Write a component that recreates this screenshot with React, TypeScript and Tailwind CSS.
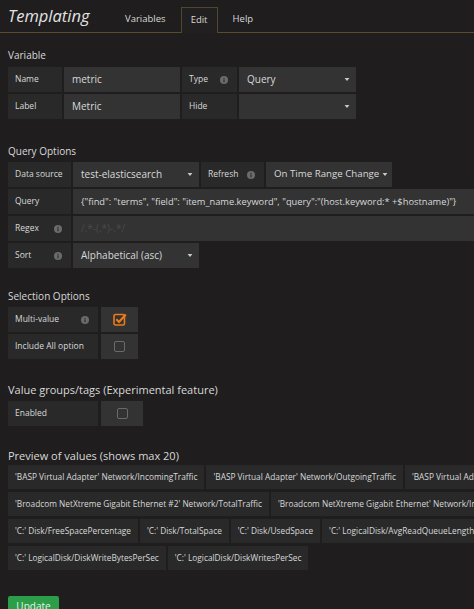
import { ReactNode } from "react";

const FONT = { fontFamily: '"Open Sans", "Noto Sans", sans-serif' };

const Info = () => (
  <svg viewBox="0 0 10 10" className="h-[8px] w-[8px] shrink-0">
    <circle cx="5" cy="5" r="5" fill="#6b6b6b" />
    <rect x="4.3" y="4.2" width="1.4" height="3.6" fill="#292929" />
    <rect x="4.3" y="2.2" width="1.4" height="1.3" fill="#292929" />
  </svg>
);

const Caret = () => (
  <svg viewBox="0 0 8 5" className="ml-[3px] h-[3px] w-[6px] shrink-0">
    <path d="M0 0 L8 0 L4 5 Z" fill="#c8c9ca" />
  </svg>
);

const Label = ({ w, children, info }: { w: string; children: ReactNode; info?: boolean }) => (
  <div className={`${w} flex h-full shrink-0 items-center justify-between bg-[#292929] pl-[7px] pr-[9px] text-[8.5px] whitespace-nowrap text-[#d8d9da]`}>
    <span>{children}</span>
    {info && <Info />}
  </div>
);

const Input = ({
  w,
  children,
  select,
  placeholder,
  size = "text-[10px]",
}: {
  w: string;
  children?: ReactNode;
  select?: boolean;
  placeholder?: boolean;
  size?: string;
}) => (
  <div
    className={`${w} ${size} flex h-full shrink-0 items-center justify-between overflow-hidden bg-[#333333] pl-[8px] pr-[6px] whitespace-nowrap ${
      placeholder ? "text-[#4a4a4a]" : "text-[#d8d9da]"
    }`}
  >
    <span>{children}</span>
    {select && <Caret />}
  </div>
);

const Check = ({ checked }: { checked?: boolean }) =>
  checked ? (
    <svg viewBox="0 0 14 13" className="h-[13px] w-[14px]">
      <rect x="1" y="1.5" width="10.5" height="10.5" rx="1.5" fill="none" stroke="#eb7b18" strokeWidth="1.6" />
      <path d="M3.3 6.3 L6 9 L12.8 1.6" fill="none" stroke="#eb7b18" strokeWidth="2.2" />
    </svg>
  ) : (
    <div className="h-[11px] w-[11px] rounded-[2px] border border-[#6a6a6a]" />
  );

const Heading = ({ children, className }: { children: ReactNode; className: string }) => (
  <div className={`text-[#d8d9da] ${className}`}>{children}</div>
);

const Tag = ({ children }: { children: ReactNode }) => (
  <div className="flex h-full shrink-0 items-center bg-[#292929] px-[7px] text-[8.3px] whitespace-nowrap text-[#d8d9da]">
    {children}
  </div>
);

const tagRows = [
  [
    "'BASP Virtual Adapter' Network/IncomingTraffic",
    "'BASP Virtual Adapter' Network/OutgoingTraffic",
    "'BASP Virtual Adapter' Network/TotalTraffic",
  ],
  [
    "'Broadcom NetXtreme Gigabit Ethernet #2' Network/TotalTraffic",
    "'Broadcom NetXtreme Gigabit Ethernet' Network/IncomingTraffic",
  ],
  ["'C:' Disk/FreeSpacePercentage", "'C:' Disk/TotalSpace", "'C:' Disk/UsedSpace", "'C:' LogicalDisk/AvgReadQueueLength", "'C:' LogicalDisk/AvgWriteQueueLength"],
  ["'C:' LogicalDisk/DiskWriteBytesPerSec", "'C:' LogicalDisk/DiskWritesPerSec"],
];

export default function App() {
  return (
    <div className="h-[609px] w-[474px] overflow-hidden bg-[#1f1d1d]" style={FONT}>
      <header className="flex h-[33px] items-end border-b border-[#5b4c30]">
        <div className="w-[88px] shrink-0 self-start pt-[4px] pl-[8px] text-[16.5px] leading-[24px] italic text-[#e3e3e3]">Templating</div>
        <nav className="ml-[22px] flex items-end text-[9.5px] text-[#d8d9da]">
          <div className="flex h-[25px] items-center px-[15px]">Variables</div>
          <div className="-mb-px flex h-[26px] w-[37px] items-center justify-center border border-b-0 border-[#524631] bg-[#211f1f]">Edit</div>
          <div className="flex h-[25px] items-center px-[15px]">Help</div>
        </nav>
      </header>

      <main className="px-[8px]">
        <Heading className="mt-[13px] mb-[3px] text-[10px] leading-[18px]">Variable</Heading>
        <div className="flex flex-col gap-[2px]">
          <div className="flex h-[25px] gap-[2px]">
            <Label w="w-[54px]">Name</Label>
            <Input w="w-[116px]">metric</Input>
            <Label w="w-[55px]" info>Type</Label>
            <Input w="w-[117px]" select>Query</Input>
          </div>
          <div className="flex h-[25px] gap-[2px]">
            <Label w="w-[54px]">Label</Label>
            <Input w="w-[116px]">Metric</Input>
            <Label w="w-[55px]">Hide</Label>
            <Input w="w-[117px]" select />
          </div>
        </div>

        <Heading className="mt-[23px] mb-[2px] text-[10px] leading-[18px]">Query Options</Heading>
        <div className="flex flex-col gap-[2px]">
          <div className="flex h-[25px] gap-[2px]">
            <Label w="w-[63px]">Data source</Label>
            <Input w="w-[126px]" select>test-elasticsearch</Input>
            <Label w="w-[63px]" info>Refresh</Label>
            <Input w="w-[126px]" select size="text-[9.7px]">On Time Range Change</Input>
          </div>
          <div className="flex h-[25px] gap-[2px]">
            <Label w="w-[63px]">Query</Label>
            <Input w="w-[420px]" size="text-[9.3px]">
              {'{"find": "terms", "field": "item_name.keyword", "query":"(host.keyword:* +$hostname)"}'}
            </Input>
          </div>
          <div className="flex h-[25px] gap-[2px]">
            <Label w="w-[63px]" info>Regex</Label>
            <Input w="w-[420px]" placeholder>/.*-(.*)-.*/</Input>
          </div>
          <div className="flex h-[25px] gap-[2px]">
            <Label w="w-[63px]" info>Sort</Label>
            <Input w="w-[126px]" select>Alphabetical (asc)</Input>
          </div>
        </div>

        <Heading className="mt-[19px] mb-[2px] text-[10px] leading-[18px]">Selection Options</Heading>
        <div className="flex flex-col gap-[2px]">
          <div className="flex h-[25px] gap-[3px]">
            <Label w="w-[90px]" info>Multi-value</Label>
            <div className="flex h-full w-[37px] items-center justify-center bg-[#333333]">
              <Check checked />
            </div>
          </div>
          <div className="flex h-[25px] gap-[3px]">
            <Label w="w-[90px]">Include All option</Label>
            <div className="flex h-full w-[37px] items-center justify-center bg-[#333333]">
              <Check />
            </div>
          </div>
        </div>

        <Heading className="mt-[21px] mb-[1px] text-[11px] leading-[20px]">Value groups/tags (Experimental feature)</Heading>
        <div className="flex h-[25px] gap-[3px]">
          <Label w="w-[90px]">Enabled</Label>
          <div className="flex h-full w-[42px] items-center justify-center bg-[#333333]">
            <Check />
          </div>
        </div>

        <Heading className="mt-[21px] mb-0 text-[11px] leading-[18px]">Preview of values (shows max 20)</Heading>
        <div className="flex flex-col gap-[3px]">
          {tagRows.map((row, i) => (
            <div key={i} className="flex h-[24px] gap-[2px]">
              {row.map((t) => (
                <Tag key={t}>{t}</Tag>
              ))}
            </div>
          ))}
        </div>

        <button className="mt-[26px] flex h-[28px] w-[51px] items-start justify-center rounded-[2px] bg-[#2c9d48] pt-[4px] text-[10px] leading-[12px] text-[#e8f5ec]">
          Update
        </button>
      </main>
    </div>
  );
}
